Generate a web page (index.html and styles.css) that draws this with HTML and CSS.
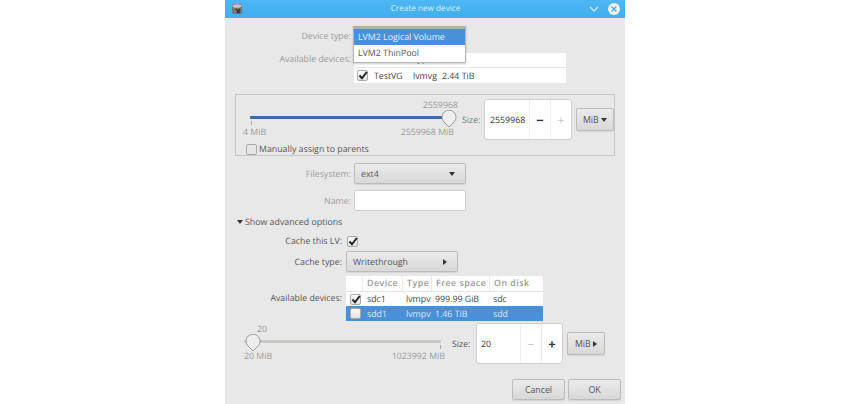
FILE: index.html
```html
<!DOCTYPE html>
<html lang="en">
<head>
<meta charset="utf-8">
<title>Create new device</title>
<link rel="stylesheet" href="styles.css">
</head>
<body>
<main class="window">
  <header class="titlebar">
    <svg class="app-icon" width="12" height="12" viewBox="0 0 12 12"><rect x="1" y="1" width="10" height="10" rx="2" fill="#77787c"/><ellipse cx="6" cy="3" rx="4.5" ry="1.8" fill="#c5c5c7"/><path d="M5 6l4 4M9 6l-3 4" stroke="#2e3134" stroke-width="1.4"/></svg>
    <span class="title">Create new device</span>
    <svg class="chev" width="10" height="6" viewBox="0 0 10 6"><path d="M1 1l4 4 4-4" fill="none" stroke="#d8effc" stroke-width="1.2"/></svg>
    <svg class="close" width="12" height="12" viewBox="0 0 12 12"><circle cx="6" cy="6" r="6" fill="#e9f6fe"/><path d="M3.6 3.6l4.8 4.8M8.4 3.6l-4.8 4.8" stroke="#5aa6d8" stroke-width="1.4"/></svg>
  </header>

  <section class="top">
    <div class="row r-type"><span class="label dim">Device type:</span></div>
    <div class="row r-avail">
      <span class="label dim lab-avail">Available devices:</span>
      <div class="table t1">
        <div class="thead"><span class="th th-type">Type</span></div>
        <div class="trow">
          <span class="check on"><svg width="10" height="9" viewBox="0 0 10 9"><path d="M1.5 4.5l2.5 2.8L8.8 1" fill="none" stroke="#222" stroke-width="2"/></svg></span>
          <span class="c-name">TestVG</span><span class="c-type">lvmvg</span><span>2.44 TiB</span>
        </div>
      </div>
    </div>
    <div class="menu">
      <div class="menu-item active">LVM2 Logical Volume</div>
      <div class="menu-item">LVM2 ThinPool</div>
    </div>
  </section>

  <section class="sizebox">
    <div class="size-row">
      <div class="slider s1">
        <div class="val">2559968</div>
        <div class="track"><div class="fill"></div>
          <svg class="thumb" width="16" height="18" viewBox="0 0 16 18"><path d="M8 17L2.6 11.6A7 7 0 1 1 13.4 11.6Z" fill="#eeeeee" stroke="#9a9a9a"/></svg>
          <i class="tick"></i>
        </div>
        <div class="ends"><span>4 MiB</span><span>2559968 MiB</span></div>
      </div>
      <span class="size-label dim2">Size:</span>
      <div class="spin sp1"><span class="sp-val">2559968</span><span class="sp-btn">−</span><span class="sp-btn off">+</span></div>
      <button class="btn unit u1">MiB <i class="tri-d"></i></button>
    </div>
    <label class="manual"><span class="check"></span>Manually assign to parents</label>
  </section>

  <section class="form">
    <div class="row r-fs"><span class="label dim">Filesystem:</span><div class="btn combo"><span>ext4</span><i class="tri-d"></i></div></div>
    <div class="row r-name"><span class="label dim">Name:</span><div class="entry"></div></div>
    <div class="expander"><i class="tri-d"></i>Show advanced options</div>
    <div class="row r-cache"><span class="label2">Cache this LV:</span><span class="check on"><svg width="10" height="9" viewBox="0 0 10 9"><path d="M1.5 4.5l2.5 2.8L8.8 1" fill="none" stroke="#222" stroke-width="2"/></svg></span></div>
    <div class="row r-ctype"><span class="label2">Cache type:</span><div class="btn combo"><span>Writethrough</span><i class="tri-r"></i></div></div>
    <div class="row r-avail2">
      <span class="label2 lab-avail2">Available devices:</span>
      <div class="table t2">
        <div class="thead h2"><span class="c0"></span><span class="c1">Device</span><span class="c2">Type</span><span class="c3">Free space</span><span class="c4">On disk</span></div>
        <div class="trow r2">
          <span class="c0"><span class="check on"><svg width="10" height="9" viewBox="0 0 10 9"><path d="M1.5 4.5l2.5 2.8L8.8 1" fill="none" stroke="#222" stroke-width="2"/></svg></span></span>
          <span class="c1">sdc1</span><span class="c2">lvmpv</span><span class="c3">999.99 GiB</span><span class="c4">sdc</span>
        </div>
        <div class="trow r2 sel">
          <span class="c0"><span class="check"></span></span>
          <span class="c1">sdd1</span><span class="c2">lvmpv</span><span class="c3">1.46 TiB</span><span class="c4">sdd</span>
        </div>
      </div>
    </div>
    <div class="size-row sr2">
      <div class="slider s2">
        <div class="val">20</div>
        <div class="track">
          <svg class="thumb" width="16" height="18" viewBox="0 0 16 18"><path d="M8 17L2.6 11.6A7 7 0 1 1 13.4 11.6Z" fill="#eeeeee" stroke="#9a9a9a"/></svg>
          <i class="tick"></i>
        </div>
        <div class="ends"><span>20 MiB</span><span>1023992 MiB</span></div>
      </div>
      <span class="size-label">Size:</span>
      <div class="spin sp2"><span class="sp-val">20</span><span class="sp-btn off">−</span><span class="sp-btn">+</span></div>
      <button class="btn unit u2">MiB <i class="tri-r"></i></button>
    </div>
  </section>

  <footer class="actions">
    <button class="btn action">Cancel</button>
    <button class="btn action">OK</button>
  </footer>
</main>
</body>
</html>
```
FILE: styles.css
```css
* { box-sizing: border-box; }
html, body { margin: 0; height: 100%; background: #fff; }
body { display: flex; justify-content: center; font: 8.8px/12px "Open Sans", "Noto Sans", sans-serif; text-rendering: geometricPrecision; color: #555; overflow: hidden; }

.window { width: 400px; height: 404px; background: #e8e8e8; display: flex; flex-direction: column; position: relative; }

.titlebar { height: 18px; flex: none; display: flex; align-items: center; padding: 0 5px 0 6px; background: linear-gradient(#4fb7f2, #3faeef); color: #d9f0fc; position: relative; }
.app-icon { flex: none; }
.title { flex: 1; text-align: center; padding-left: 19px; font-size: 8.2px; }
.chev { margin-right: 9px; }
.close { flex: none; }

.top { position: relative; height: 76px; flex: none; }
.row { display: flex; align-items: center; }
.label { width: 126px; text-align: right; margin-right: 3px; flex: none; }
.label2 { width: 117px; text-align: right; margin-right: 4px; flex: none; }
.dim { color: #9b9b9b; }
.dim2 { color: #777; }

.r-type { height: 17px; margin-top: 9px; }
.r-avail { align-items: flex-start; margin-top: 9px; }

.table { background: #fff; }
.t1 { width: 212px; height: 30px; }
.thead { height: 15px; border-bottom: 1px solid #e6e6e6; display: flex; color: #999; font-weight: 600; }
.th-type { margin-left: 58px; }
.trow { display: flex; align-items: center; }
.t1 .trow { height: 15px; padding-left: 3px; color: #444; }
.c-name { margin-left: 6px; width: 39px; }
.c-type { width: 29px; }

.check { width: 11px; height: 11px; flex: none; display: inline-flex; align-items: center; justify-content: center; border: 1px solid #a9a9a9; border-radius: 2px; background: linear-gradient(#fafafa, #e4e4e4); }
.check svg { flex: none; }

.menu { position: absolute; left: 128px; top: 8px; width: 113px; height: 37px; background: #fff; border: 1px solid #b4b4b4; border-top: 3px solid #b0b0b0; box-shadow: 0 1px 2px rgba(0,0,0,.2); }
.menu-item { height: 16px; line-height: 16px; padding-left: 4px; color: #555; }
.menu-item + .menu-item { height: 17px; line-height: 17px; }
.menu-item.active { background: #4a90d9; color: #e8f0fa; }

.sizebox { flex: none; margin-left: 10px; width: 380px; height: 62px; border: 1px solid #c6c6c6; display: flex; flex-direction: column; padding-top: 4px; }
.size-row { display: flex; align-items: flex-start; }
.slider { flex: none; position: relative; color: #9a9a9a; }
.s1 { width: 212px; margin-left: 14px; }
.val { height: 12px; text-align: right; }
.s1 .val { width: 208px; }
.track { height: 3px; margin-top: 5px; background: #c8c8c4; border-radius: 1px; position: relative; }
.s1 .track { width: 200px; }
.fill { height: 3px; background: #3e6ca6; border-radius: 1px; }
.thumb { position: absolute; top: -6px; }
.s1 .thumb { right: -7px; }
.s2 .thumb { left: 1px; }
.tick { position: absolute; top: 5px; width: 1px; height: 4px; background: #aaa; }
.s1 .tick { left: 1px; }
.s2 .tick { right: 0; }
.ends { display: flex; justify-content: space-between; margin-top: 7px; }
.s1 .ends { width: 211px; margin-left: -7px; }

.size-label { width: 21px; flex: none; margin-top: 15px; }
.spin { flex: none; display: flex; height: 41px; background: #fff; border: 1px solid #cfcfcf; border-radius: 3px; align-items: center; color: #333; }
.sp1 { width: 88px; margin-left: 1px; }
.sp-val { flex: 1; padding-left: 5px; align-self: center; }
.sp-btn { width: 21px; height: 100%; border-left: 1px solid #eee; display: flex; align-items: center; justify-content: center; font-size: 13px; font-weight: 700; color: #333; }
.sp-btn.off { color: #ccc; font-weight: 400; }

.btn { font: inherit; color: #555; background: linear-gradient(#ebebeb, #d8d8d8); border: 1px solid #bcbcbc; border-radius: 2px; box-shadow: 0 1px 1px rgba(0,0,0,.08); }
.unit { flex: none; padding: 0; height: 23px; }
.u1 { width: 38px; margin: 9px 0 0 4px; }
.tri-d { display: inline-block; border: 3px solid transparent; border-top: 4px solid #333; border-bottom: 0; vertical-align: 1px; }
.tri-r { display: inline-block; border: 3px solid transparent; border-left: 4px solid #333; border-right: 0; vertical-align: 0; }

.manual { display: flex; align-items: center; margin: 3px 0 0 10px; gap: 2px; }
.manual .check { background: #e6e6e6; }

.form { flex: 1; min-height: 0; }
.combo { width: 112px; height: 21px; display: flex; justify-content: space-between; align-items: center; padding: 0 10px 0 6px; }
.combo .tri-d, .combo .tri-r { vertical-align: 0; }
.r-fs { margin-top: 7px; }
.r-name { margin-top: 6px; }
.entry { width: 112px; height: 21px; background: #fff; border: 1px solid #cfcfcf; border-radius: 2px; }
.expander { margin: 5px 0 0 12px; height: 12px; }
.expander .tri-d { margin-right: 2px; vertical-align: 1px; }
.r-cache { margin-top: 7px; height: 12px; }
.r-cache .check { margin-left: 1px; }
.r-ctype { margin-top: 4px; }
.r-avail2 { margin-top: 4px; align-items: flex-start; }
.lab-avail2 { margin-top: 16px; }
.t2 { width: 197px; height: 44px; }
.h2 { align-items: center; height: 16px; letter-spacing: .5px; }
.h2 > span { height: 100%; line-height: 15px; border-right: 1px solid #ececec; }
.h2 .c4 { border-right: 0; }
.c0 { width: 17px; flex: none; padding-left: 4px; display: flex; align-items: center; }
.c1 { width: 40px; flex: none; padding-left: 4px; }
.c2 { width: 29px; flex: none; padding-left: 3px; }
.c3 { width: 58px; flex: none; padding-left: 3px; }
.c4 { flex: 1; padding-left: 3px; }
.h2 .c1, .h2 .c2, .h2 .c3, .h2 .c4 { padding-left: 4px; }
.r2 { height: 14px; color: #444; }
.sel { background: #4a90d9; color: #dceafa; height: 15px; }

.sr2 { margin-top: 3px; }
.s2 { width: 209px; margin-left: 19px; }
.s2 .val { text-align: left; padding-left: 13px; }
.s2 .track { width: 197px; }
.s2 .ends { width: 201px; }
.sr2 .size-label { margin-left: -1px; }
.sp2 { width: 87px; margin-left: 3px; }
.sp2 .sp-val { padding-left: 4px; }
.u2 { width: 38px; margin: 9px 0 0 4px; }

.actions { flex: none; display: flex; justify-content: flex-end; gap: 3px; padding: 0 4px 4px 0; }
.action { width: 53px; height: 21px; padding: 0; }
```
